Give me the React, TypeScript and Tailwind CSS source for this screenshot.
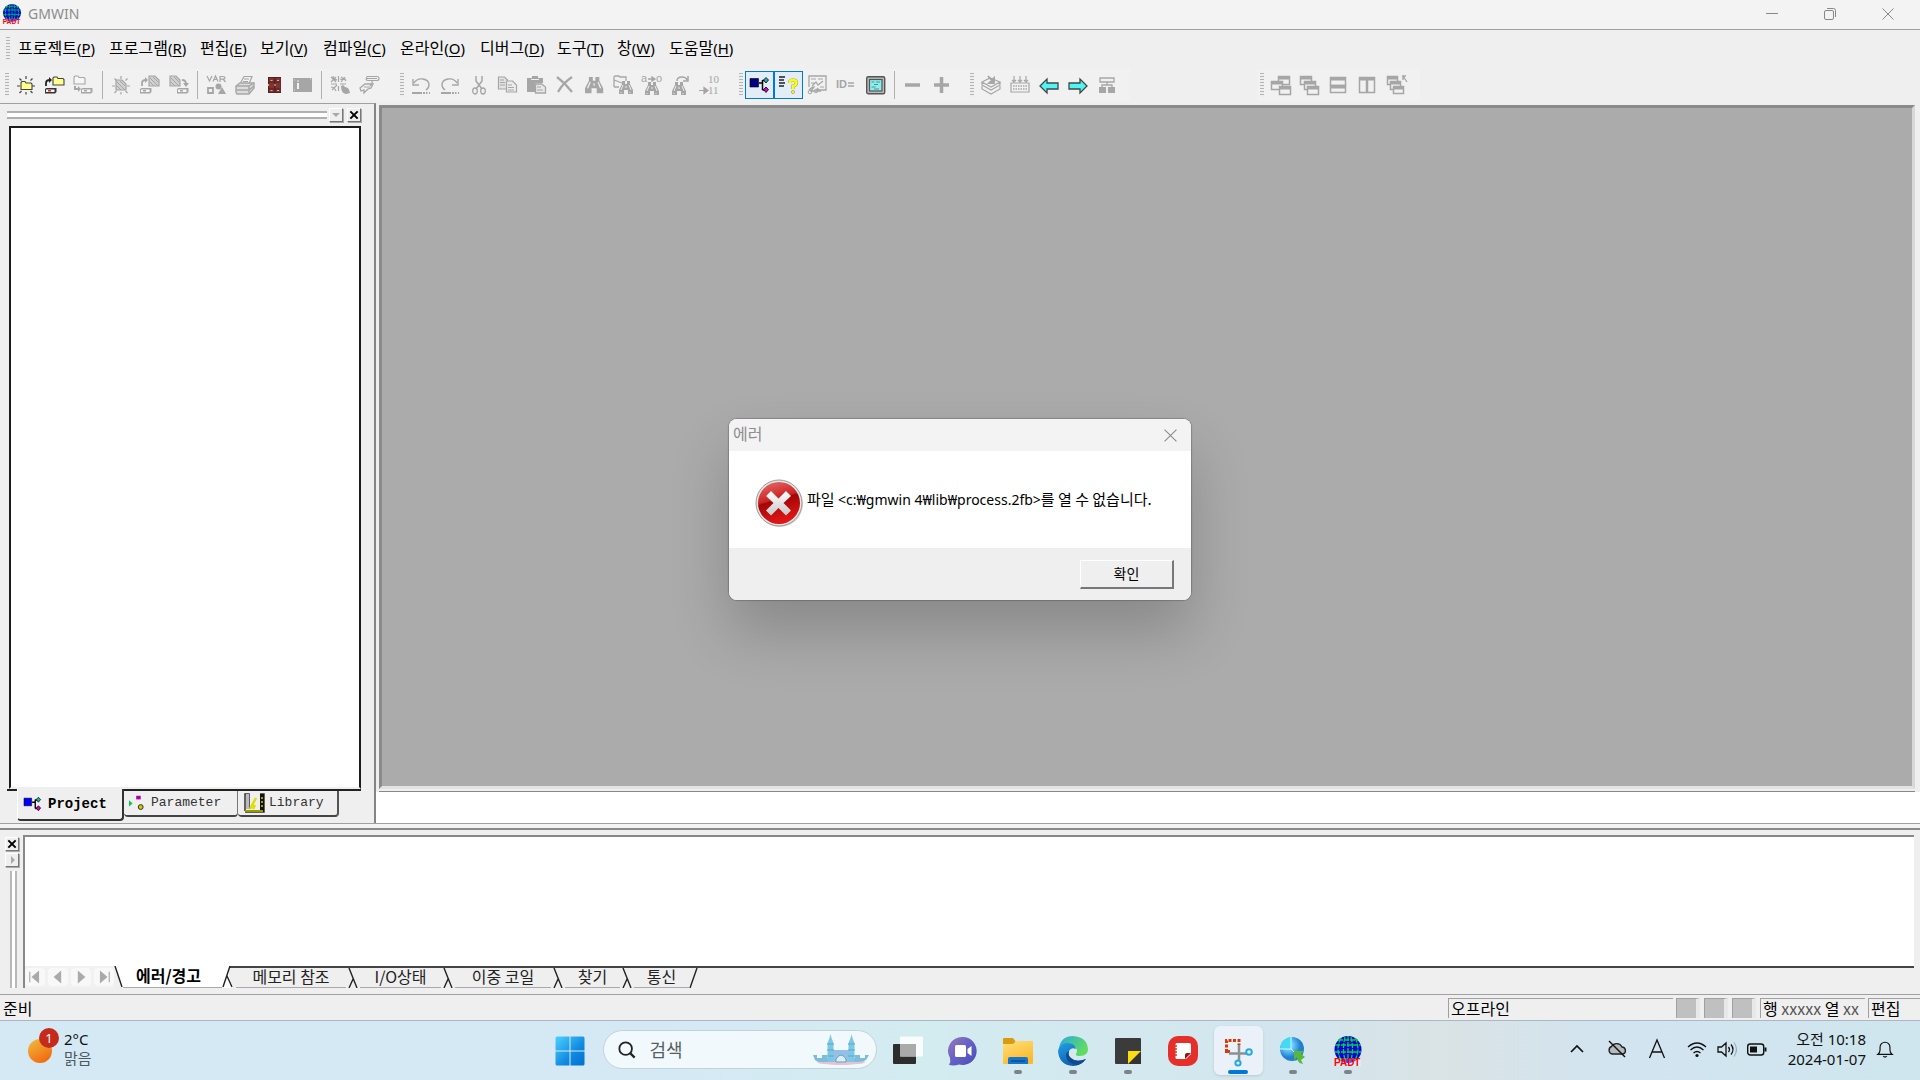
import React from 'react';

const G = '#a6a6a6';

type SvgProps = { children: React.ReactNode; size?: number; box?: string; className?: string };
const Svg = ({ children, size = 20, box = '0 0 20 20', className = '' }: SvgProps) => (
  <svg width={size} height={size} viewBox={box} fill="none" className={`overflow-visible ${className}`} aria-hidden="true">
    {children}
  </svg>
);

const Rays = ({ c }: { c: string }) => (
  <path d="M10 1v3M10 17v2.500M1 11h3M16 11h3M3.500 3.500l2 2M16.500 3.500l-2 2M3.500 18l2-2M16.500 18l-2-2" stroke={c} strokeWidth="1.200" />
);

const Folder = ({ x, y, fill, c }: { x: number; y: number; fill: string; c: string }) => (
  <path d={`M${x} ${y + 8.5}V${y + 1.5}l1-1h3l1 1.500h5l1 1v5.500z`} fill={fill} stroke={c} strokeWidth="1.100" />
);

const Disk = ({ x, y, c, led }: { x: number; y: number; c: string; led: string }) => (
  <>
    <path d={`M${x} ${y + 1}l1.500-1h10v4l-1.500 1.500h-10z`} fill={c} />
    <path d={`M${x + 1} ${y + 1.5}h8.500v2.500h-8.500z`} fill="#f6f6f6" />
    <path d={`M${x + 3} ${y + 2}h3v1.500h-3z`} fill={led} />
  </>
);

const Page = ({ x, y }: { x: number; y: number }) => (
  <>
    <path d={`M${x} ${y}h6l4 4v6h-10z`} fill="#d0d0d0" stroke={G} strokeWidth="1.200" />
    <path d={`M${x + 1} ${y + 2}l8 8M${x + 1} ${y + 6}l4 4M${x + 4} ${y + 1}l5 5`} stroke={G} />
  </>
);

const Bino = ({ x = 0, y = 0 }: { x?: number; y?: number }) => (
  <g transform={`translate(${x} ${y})`}>
    <path d="M3 0h3v3h2V0h3v3l3 6v4H9V9H5v4H0V9l3-6z" fill={G} />
    <path d="M4 4L2 9M10 4l2 5M2 11v1M11 11v1M7 5v2" stroke="#f1f1f1" strokeWidth="0.900" />
  </g>
);

const Win = ({ x, y, w = 11, h = 8 }: { x: number; y: number; w?: number; h?: number }) => (
  <>
    <rect x={x + 0.5} y={y + 0.5} width={w} height={h} fill="#f1f1f1" stroke={G} strokeWidth="1.500" />
    <rect x={x} y={y} width={w + 1} height="3.500" fill={G} />
  </>
);

const Tree = ({ fill, size = 20 }: { fill: string; size?: number }) => (
  <Svg size={size}>
    <path d="M0 3.500h8.500v8.500H0z" fill={fill} stroke="#000" strokeWidth="0.600" />
    <path d="M9 8h4M12.500 5v10M12.500 5.500h3M12.500 15h3" stroke="#000" strokeWidth="1.500" />
    <path d="M16 2.500l2.500 2.500L16 8 13.500 5z" fill="#2aa" stroke="#000" strokeWidth="0.800" />
    <path d="M16 12l2.500 2.500-2.500 3-2.500-3z" fill="#c0c" stroke="#000" strokeWidth="0.800" />
  </Svg>
);

const fileIcons: [string, React.ReactNode][] = [
  ['새 프로젝트', <Svg><Rays c="#444" /><Folder x={5} y={6} fill="#ffff8c" c="#444" /></Svg>],
  ['프로젝트 열기', <Svg><Folder x={8} y={1.5} fill="#ffff8c" c="#444" /><Disk x={0} y={13} c="#333" led="#e22" /><path d="M1 11V8q0-3 4-3" stroke="#222" strokeWidth="1.800" /><path d="M4 2l3 3-3 3z" fill="#222" /></Svg>],
  ['프로젝트 저장', <Svg><Folder x={0} y={0.5} fill="#f6f6f6" c={G} /><Disk x={7} y={13} c={G} led={G} /><path d="M1 11v3h4" stroke={G} strokeWidth="2" /><path d="M4 11l3 3-3 3z" fill={G} /></Svg>],
];
const programIcons: [string, React.ReactNode][] = [
  ['새 프로그램', <Svg><Rays c={G} /><Page x={5} y={5} /></Svg>],
  ['프로그램 열기', <Svg><Page x={9} y={1} /><Disk x={0} y={13} c={G} led={G} /><path d="M2 11V8q0-3 4-3" stroke={G} strokeWidth="1.800" /><path d="M5 2l3 3-3 3z" fill={G} /></Svg>],
  ['프로그램 저장', <Svg><Page x={1} y={1} /><Disk x={8} y={13} c={G} led={G} /><path d="M13 5q4 0 4 4" stroke={G} strokeWidth="1.800" /><path d="M14 8h6l-3 4z" fill={G} /></Svg>],
];
const viewIcons: [string, React.ReactNode][] = [
  ['변수', <Svg><path d="M1 1l2.500 5L6 1M7 6.500L9.500 1 12 6.500M8 4.500h3M14 7V1.500h3q2 0 2 1.300t-2 1.300h-3M17 4l2.500 3" stroke={G} strokeWidth="1.200" /><path d="M2 13h5v5H2z" stroke={G} strokeWidth="1.800" /><circle cx="12.500" cy="11.500" r="3" fill={G} /><path d="M16 12l4 7h-8z" fill={G} /></Svg>],
  ['인쇄', <Svg><path d="M5 9l4-7.500h8L14 9z" fill="#f1f1f1" stroke={G} strokeWidth="1.200" /><path d="M9 4h5M8 6.500h5" stroke={G} strokeWidth="1.100" /><path d="M1 11l4-3h14v5l-5 6H2l-1-2z" fill="#dcdcdc" stroke={G} strokeWidth="1.400" /><path d="M1 11h13l5-3M1 15h13l5-4M14 11v7" stroke={G} strokeWidth="1.400" /></Svg>],
  ['라이브러리', <Svg><path d="M4 2h13v16H4z" fill="#4f2226" /><path d="M5 3h5v14H5zM11.500 3h5v14h-5z" fill="#843038" /><path d="M5 7h5M11.500 7h5M5 14h5M11.500 14h5" stroke="#4a2024" /><path d="M6.500 5.500h2M13 5.500h2M6.500 15.500h2M13 15.500h2M4.500 9v2M11 9v2" stroke="#d9b84a" strokeWidth="1.200" /></Svg>],
  ['정보', <Svg><path d="M0 3h19v14H0z" fill={G} /><path d="M4 6h2M4.500 8v6M5.500 8v6" stroke="#f1f1f1" /><path d="M1 5h1M1 15h1M17 4h1" stroke="#ddd" /></Svg>],
];
const compileIcons: [string, React.ReactNode][] = [
  ['컴파일', <Svg><path d="M1 2l5 5M6 2L1 7M8.500 1v6M11 7l4-5M1 9h6M10 9h6M2 15l5-5M8.500 11v5M1 12q3 0 5 4M11 2q3 1 5 4M3 1q0 3 4 4M10 4q4 1 6 0" stroke={G} strokeWidth="1.200" /><path d="M11 11l2-1 2 2q4 0 5 6l-4 1q-5-1-5-8z" fill={G} /></Svg>],
  ['연결', <Svg><path d="M8 1.500h10q2 0 2 2t-2 2H9q-3 0-1-4M8 3.500h10M13 6v3l-2 2" stroke={G} strokeWidth="1.200" /><path d="M1 13l5-4h8l-2 4-3 1-4 4v-3l-3 1z" stroke={G} strokeWidth="1.300" /><path d="M5 12h6" stroke={G} /></Svg>],
];
const editIcons: [string, React.ReactNode][] = [
  ['실행 취소', <Svg><path d="M3 8q3-5 9-4 6 1 6 6 0 3-3 5M2 4v6h6" stroke={G} strokeWidth="1.400" /><path d="M1 18h10M12 18h2M15 18h1.500M18 18h1" stroke={G} strokeWidth="1.800" /></Svg>],
  ['다시 실행', <Svg><path d="M17 8q-3-5-9-4-6 1-6 6 0 3 3 5M18 4v6h-6" stroke={G} strokeWidth="1.400" /><path d="M1 18h10M12 18h2M15 18h1.500M18 18h1" stroke={G} strokeWidth="1.800" /></Svg>],
  ['잘라내기', <Svg><path d="M7 1v5l6 8M13 1v5l-6 8" stroke={G} strokeWidth="1.500" /><ellipse cx="6" cy="16" rx="2.300" ry="3" stroke={G} strokeWidth="1.300" /><ellipse cx="14" cy="16" rx="2.300" ry="3" stroke={G} strokeWidth="1.300" /></Svg>],
  ['복사', <Svg><path d="M0.500 2h6l3 3v9h-9z" fill="#e3e3e3" stroke={G} strokeWidth="1.200" /><path d="M8.500 6h6l4 4v7h-10z" fill="#ececec" stroke={G} strokeWidth="1.200" /><path d="M2 5h4M2 7.500h5M2 10h5M10 10h4M10 12.500h6M10 15h6" stroke={G} /></Svg>],
  ['붙여넣기', <Svg><path d="M0 3h5V1h6v2h5v5H8v9H0z" fill={G} /><path d="M4 4.500h8" stroke="#eee" /><path d="M8.500 9h6l4 3v6h-10z" fill="#e8e8e8" stroke={G} strokeWidth="1.300" /><path d="M10 12h4M10 15h6" stroke={G} /></Svg>],
  ['삭제', <Svg><path d="M1 2q8 6 15 15M16 2q-9 6-14 15" stroke={G} strokeWidth="2.200" /></Svg>],
  ['찾기', <Svg><g transform="translate(0 2) scale(1.300 1.250)"><path d="M3 0h3v3h2V0h3v3l3 6v4H9V9H5v4H0V9l3-6z" fill={G} /><path d="M4 4L2 9M10 4l2 5M7 5v2" stroke="#f1f1f1" strokeWidth="0.900" /></g></Svg>],
  ['파일에서 찾기', <Svg><path d="M0 12V2l1-1h4l1 1h6v4M0 5l8 3M0 12h5" stroke={G} strokeWidth="1.300" /><Bino x={5} y={6} /></Svg>],
  ['바꾸기', <Svg><text x="-2" y="7" fontSize="11" fontFamily="Liberation Sans" fill={G}>a</text><text x="13" y="7" fontSize="11" fontFamily="Liberation Sans" fill={G}>o</text><path d="M5 4h6M9 2l3 2-3 2z" stroke={G} strokeWidth="1.300" fill={G} /><Bino x={2} y={7} /></Svg>],
  ['다시 찾기', <Svg><path d="M5 6q0-4 5-4 4 0 5 3M16 1v5h-5" stroke={G} strokeWidth="1.500" /><Bino x={0} y={7} /></Svg>],
  ['줄 이동', <Svg><text x="7" y="8" fontSize="11" fontFamily="Liberation Serif" fill={G}>10</text><text x="7" y="19" fontSize="11" fontFamily="Liberation Serif" fill={G}>11</text><path d="M-2 15.500h6M3 12.500l4 3-4 3z" stroke={G} strokeWidth="1.200" fill={G} /></Svg>],
];
const showIcons: [string, React.ReactNode][] = [
  ['프로젝트 창', <Tree fill="#000080" />],
  ['메시지 창', <Svg><path d="M0 2h6M0 5h5M0 8h6M0 11h5" stroke="#222" strokeWidth="1.300" /><path d="M10.500 8q0-3 3.500-3t3.500 2.800q0 2.500-3.500 3.200v3" stroke="#888" strokeWidth="3.200" /><path d="M10.500 8q0-3 3.500-3t3.500 2.800q0 2.500-3.500 3.200v3" stroke="#ff0" strokeWidth="2.500" /><circle cx="14" cy="17" r="1.600" fill="#ff0" stroke="#777" strokeWidth="0.500" /></Svg>],
  ['모니터', <Svg><path d="M1 12V1h17v14H8" stroke={G} strokeWidth="1.300" /><path d="M3 4h5M10 4h5M4 11l4-4 2 3 5-4M3 8h3M12 12h4" stroke={G} strokeWidth="1.200" /><path d="M1 15q3-3 5-3l-3 4h9l-3-3" stroke={G} strokeWidth="1.300" /><circle cx="2" cy="17" r="1.800" stroke={G} /><circle cx="8" cy="16" r="1.800" stroke={G} /></Svg>],
  ['ID', <Svg><text x="-1" y="13" fontSize="11" fontWeight="bold" fontFamily="Liberation Sans" fill={G}>ID</text><path d="M11 8h6M11 11h6" stroke={G} strokeWidth="1.400" /></Svg>],
  ['출력 창', <Svg><rect x="0.700" y="1.700" width="18" height="17" rx="1.500" fill="#bbb" stroke="#555" strokeWidth="1.400" /><rect x="3.500" y="4.500" width="12.500" height="11.500" fill="#8deeee" stroke="#555" strokeWidth="1.200" /><path d="M5.500 7h3M10 7h4M8 9.500h4M5.500 12h4M8 14h5" stroke="#488" strokeWidth="0.900" /></Svg>],
];
const zoomIcons: [string, React.ReactNode][] = [
  ['축소', <Svg><path d="M2 10h15" stroke={G} strokeWidth="3.500" /></Svg>],
  ['확대', <Svg><path d="M2 10h15M9.500 2v16" stroke={G} strokeWidth="3.500" /></Svg>],
];
const onlineIcons: [string, React.ReactNode][] = [
  ['쓰기', <Svg><path d="M1 7l8-4 10 4-9 5zM1 7v3l9 5 9-5V7M1 11v3l9 5 9-5v-3" stroke={G} strokeWidth="1.200" /><path d="M7 1l5 6M13 3v5H8z" stroke={G} strokeWidth="1.800" fill={G} /></Svg>],
  ['읽기', <Svg><path d="M1 8h18v9H1zM4 1v6M10 1v6M16 1v6M2 5l2 2 2-2M8 5l2 2 2-2M14 5l2 2 2-2" stroke={G} strokeWidth="1.200" /><path d="M3 11h14M3 14h14" stroke={G} strokeWidth="1.600" strokeDasharray="1.500 1" /></Svg>],
  ['이전', <Svg><path d="M1 11l7-7v4h11v6H8v4z" fill="#4ef5f5" stroke="#444" strokeWidth="1.300" /></Svg>],
  ['다음', <Svg><path d="M19 11l-7-7v4H1v6h11v4z" fill="#4ef5f5" stroke="#444" strokeWidth="1.300" /></Svg>],
  ['네트워크', <Svg><path d="M3 3h14v4H3zM10 7v3M5 13v-3h10v3" stroke={G} strokeWidth="1.300" /><path d="M2 12h7v6H2zM11 12h7v6h-7z" fill={G} /></Svg>],
];
const windowIcons: [string, React.ReactNode][] = [
  ['정렬', <Svg><Win x={7} y={1} /><Win x={0} y={6} /><Win x={8} y={11} /></Svg>],
  ['계단식', <Svg><Win x={0} y={1} /><Win x={4} y={6} /><Win x={7} y={11} /></Svg>],
  ['가로 배열', <Svg><Win x={1} y={2} w={15} /><Win x={1} y={10} w={15} h={7} /></Svg>],
  ['세로 배열', <Svg><Win x={1} y={2} w={7} h={15} /><Win x={9} y={2} w={7} h={15} /></Svg>],
  ['모두 닫기', <Svg><Win x={0} y={1} w={10} /><Win x={3} y={6} w={10} /><Win x={6} y={11} w={10} h={7} /><path d="M15 1h4M16 1v4M16 1l4 6" stroke={G} strokeWidth="1.300" /></Svg>],
];

const Grip = () => (
  <span className="mr-0.5 h-6 w-1 shrink-0 bg-[repeating-linear-gradient(to_bottom,#b4b4b4_0px,#b4b4b4_1px,#eeeeee_1px,#eeeeee_3px)]" />
);
const Sep = () => <span className="mr-[3px] ml-1 h-7 w-px shrink-0 bg-[#b0b0b0]" />;
const Tools = ({ items, on = 0 }: { items: [string, React.ReactNode][]; on?: number }) => (
  <>
    {items.map(([name, icon], i) => (
      <button
        key={name}
        aria-label={name}
        className={`flex h-7 w-[29px] shrink-0 items-center justify-center ${i < on ? 'border border-[#0078d7] bg-[#e3edf7]' : ''}`}
      >
        {icon}
      </button>
    ))}
  </>
);

const menus: [string, string, string][] = [
  ['프로젝트', 'P', 'w-[91px]'],
  ['프로그램', 'R', 'w-[91px]'],
  ['편집', 'E', 'w-[60px]'],
  ['보기', 'V', 'w-[63px]'],
  ['컴파일', 'C', 'w-[77px]'],
  ['온라인', 'O', 'w-[80px]'],
  ['디버그', 'D', 'w-[77px]'],
  ['도구', 'T', 'w-[60px]'],
  ['창', 'W', 'w-[52px]'],
  ['도움말', 'H', 'w-[80px]'],
];

const Globe = ({ size }: { size: number }) => (
  <Svg size={size} box="0 0 30 30">
    <circle cx="15" cy="13.500" r="13.500" fill="#0000e0" />
    <path d="M15 0v24M2 9h26M2 16h26M5 4h20M8 2Q2 13 8 24M22 2q6 11 0 22M12 1q-3 12 0 23M18 1q3 12 0 23" stroke="#00d838" strokeWidth="1.300" strokeDasharray="5 1" />
    <path d="M2 22h26v8H2z" fill="#fff" fillOpacity="0.300" />
    <text x="1" y="30" fontSize="10" fontWeight="bold" fontFamily="Liberation Sans" fill="#f00">PADT</text>
  </Svg>
);

const CloseX = ({ size, c, w }: { size: number; c: string; w: number }) => (
  <Svg size={size} box="0 0 12 12"><path d="M0.500 0.500l11 11M11.500 0.500l-11 11" stroke={c} strokeWidth={w} /></Svg>
);

const bevel = 'border border-t-white border-l-white border-r-[#777] border-b-[#777] bg-[#efefef] shadow-[1px_1px_0_#aaa]';

const sheets: [string, string][] = [
  ['메모리 참조', 'w-[110px]'],
  ['I/O상태', 'w-[81px]'],
  ['이중 코일', 'w-[96px]'],
  ['찾기', 'w-[55px]'],
  ['통신', 'w-[55px]'],
];
const Cross = () => (
  <svg width="14" height="20" viewBox="0 0 14 20" className="shrink-0" fill="none" aria-hidden="true">
    <path d="M3 0l8 20M7.500 10L3 20" stroke="#222" strokeWidth="1.400" />
  </svg>
);

const Dialog = () => (
  <section role="dialog" aria-labelledby="dlg-title" className="absolute top-[419px] left-1/2 w-[462px] -translate-x-1/2 overflow-hidden rounded-lg bg-white shadow-[0_0_1px_1px_rgba(0,0,0,0.2),0_32px_60px_rgba(0,0,0,0.2)]">
    <header className="flex h-8 items-center justify-between bg-[#f3f3f3] pr-3.5 pl-1">
      <h2 id="dlg-title" className="pb-1 text-base leading-7 text-[#8d8d8d]">에러</h2>
      <button aria-label="닫기"><CloseX size={13} c="#8a8a8a" w={1} /></button>
    </header>
    <div className="flex h-[97px] items-start pt-7 pl-6">
      <svg width="52" height="50" viewBox="0 0 52 50" className="shrink-0" aria-hidden="true">
        <defs>
          <linearGradient id="err" x1="0" y1="0" x2="0.300" y2="1">
            <stop offset="0" stopColor="#e87070" />
            <stop offset="0.480" stopColor="#c22" />
            <stop offset="0.520" stopColor="#a00606" />
            <stop offset="1" stopColor="#e01515" />
          </linearGradient>
          <linearGradient id="errx" x1="0" y1="0" x2="0" y2="1">
            <stop offset="0" stopColor="#fff" />
            <stop offset="1" stopColor="#c8c8c8" />
          </linearGradient>
        </defs>
        <circle cx="27" cy="25" r="23" fill="#bbb" opacity="0.600" />
        <circle cx="26" cy="24" r="23" fill="#e4e4e4" stroke="#999" />
        <circle cx="26" cy="24" r="21" fill="url(#err)" />
        <path d="M18 12l7.500 7.500L33 12l5 5-7.500 7L38 31.500l-5 5-7.500-7.500-7.500 7.500-5-5 7.500-7.500-7.500-7z" fill="url(#errx)" />
      </svg>
      <p className="pt-2 pl-0.5 text-[15px] leading-6 whitespace-pre text-black">
        파일 <span className="font-['Noto_Sans','Noto_Sans_CJK_KR',sans-serif] text-sm leading-5">&lt;c:₩gmwin 4₩lib₩process.2fb&gt;</span>를 열 수 없습니다.
      </p>
    </div>
    <footer className="flex h-[52px] items-center justify-end bg-[#efefef] pr-[17px]">
      <button className="h-[29px] w-[94px] border-t border-r-2 border-b-2 border-l border-t-white border-r-[#777] border-b-[#777] border-l-white pb-0.5 text-sm leading-6 text-black">확인</button>
    </footer>
  </section>
);

const Task = ({ name, children, state = '' }: { name: string; children: React.ReactNode; state?: string }) => (
  <button aria-label={name} className="relative flex h-[59px] w-[55px] items-center justify-center">
    {state === 'active' && <span className="absolute inset-x-[3px] inset-y-[5px] rounded-md bg-[#eaf1f9] shadow-sm" />}
    <span className="relative">{children}</span>
    {state === 'open' && <span className="absolute bottom-1.5 h-1 w-2 rounded-full bg-[#7b8488]" />}
    {state === 'active' && <span className="absolute bottom-1.5 h-1 w-5 rounded-full bg-[#0078d7]" />}
  </button>
);

const Taskbar = () => (
  <footer className="grid h-15 shrink-0 grid-cols-[1fr_auto_1fr] border-t border-[#a9b8c2] bg-[linear-gradient(90deg,#d5e9f5_0%,#d5e9f5_35%,#d3ecf0_48%,#d3e5ee_68%,#dae3e5_75%,#d2e4f0_84%,#cfe6ee_100%)] font-['Noto_Sans','Noto_Sans_CJK_KR',sans-serif]">
    <button className="flex items-center justify-self-start pb-1 pl-7 text-left">
      <svg width="32" height="36" viewBox="0 0 32 36" className="mb-1.5" aria-hidden="true">
        <defs><linearGradient id="sun" x1="0" y1="0" x2="0.600" y2="1"><stop stopColor="#efc040" /><stop offset="1" stopColor="#f26a10" /></linearGradient></defs>
        <circle cx="12" cy="23" r="12" fill="url(#sun)" />
        <circle cx="21" cy="10" r="10" fill="#c42b1c" />
        <text x="21" y="15" textAnchor="middle" fontSize="13" fontFamily="Noto Sans" fill="#fff">1</text>
      </svg>
      <span className="pl-1 text-[15px] leading-[19px] text-[#111]">2°C<br /><span className="text-[#4c5960]">맑음</span></span>
    </button>
    <nav className="mr-0.5 flex items-center" aria-label="작업 표시줄">
      <Task name="시작">
        <Svg size={30} box="0 0 30 30">
          <defs><linearGradient id="win" x1="0" y1="0" x2="1" y2="1"><stop stopColor="#4cd2ff" /><stop offset="0.600" stopColor="#1189e0" /><stop offset="1" stopColor="#0070d0" /></linearGradient></defs>
          <path d="M2 0.500h12.500V14.500H0.500V2q0-1.500 1.500-1.500zM15.500 0.500H28q1.500 0 1.500 1.500V14.500H15.500zM0.500 15.500H14.500V29.500H2q-1.500 0-1.500-1.500zM15.500 15.500H29.500V28q0 1.500-1.500 1.500H15.500z" fill="url(#win)" />
        </Svg>
      </Task>
      <label className="mr-1 mb-0.5 ml-[5px] flex h-[39px] w-[274px] items-center rounded-full border border-[#bfd3dd] bg-[#f2f9fc] pr-1.5 pl-3.5">
        <Svg size={18} box="0 0 20 20"><circle cx="8.500" cy="8.500" r="7" stroke="#222" strokeWidth="2" /><path d="M13.500 13.500l5 5" stroke="#222" strokeWidth="2.500" /></Svg>
        <input aria-label="검색" placeholder="검색" className="ml-3.5 w-0 min-w-0 flex-1 bg-transparent text-lg leading-6 placeholder-[#555e63] outline-none" />
        <svg width="58" height="32" viewBox="0 0 58 32" aria-hidden="true">
          <ellipse cx="29" cy="28" rx="24" ry="3" fill="#e3c4d3" />
          <path d="M1 21h4v3h5v-3h5v3h28v-3h5v3h5v-3h4l-3 5q-3 2-8 2H11q-6 0-8-2z" fill="#7cbddb" />
          <path d="M15.500 28V9l2-5 1-4 1 4 2 5v7h15V9l2-5 1-4 1 4 2 5v19z" fill="#7cc8e4" />
          <path d="M21 16h16v12H21z" fill="#93c0e4" />
          <path d="M15 10h7M15 16h7M36 10h7M36 16h7M15 22h7M36 22h7" stroke="#5aa8ca" />
          <path d="M24 28v-3q5-8 10 0v3z" fill="#d9eef7" stroke="#6a9fbb" />
        </svg>
      </label>
      <Task name="작업 보기">
        <Svg size={30} box="0 0 30 30"><rect x="0" y="8" width="23" height="20" rx="1" fill="#2d2d2d" /><rect x="7" y="0.500" width="23" height="20" rx="1" fill="#fff" fillOpacity="0.850" /><rect x="7" y="8" width="16" height="12.500" fill="#aaa" /></Svg>
      </Task>
      <Task name="채팅">
        <Svg size={30} box="0 0 30 30">
          <defs><linearGradient id="chat" x1="0" y1="0" x2="1" y2="1"><stop stopColor="#9a78b8" /><stop offset="0.500" stopColor="#6460c8" /><stop offset="1" stopColor="#4a4cb8" /></linearGradient></defs>
          <path d="M15 1a14 14 0 1 1-4 27.500Q6 30 1 29q2-3 1-7A14 14 0 0 1 15 1z" fill="url(#chat)" />
          <rect x="7" y="9" width="11" height="12" rx="1.500" fill="#fff" /><path d="M19.500 13l4-3v10l-4-3z" fill="#fff" />
        </Svg>
      </Task>
      <Task name="파일 탐색기" state="open">
        <Svg size={30} box="0 0 30 30">
          <defs><linearGradient id="fold" x1="0" y1="0" x2="0.500" y2="1"><stop stopColor="#ffe07a" /><stop offset="1" stopColor="#fcb92c" /></linearGradient></defs>
          <path d="M0 3q0-1 1-1h9l3 4v5H0z" fill="#dc9a10" />
          <path d="M0 8h10l3-3h16q1 0 1 1v21q0 1-1 1H1q-1 0-1-1z" fill="url(#fold)" />
          <path d="M5 28v-5q0-2 2-2h16q2 0 2 2v5z" fill="#1675c8" /><path d="M8 25h14" stroke="#0b4f94" strokeWidth="1.500" />
        </Svg>
      </Task>
      <Task name="Edge" state="open">
        <Svg size={30} box="0 0 30 30">
          <defs>
            <linearGradient id="ed1" x1="0" y1="0" x2="1" y2="0.500"><stop stopColor="#2ba8e0" /><stop offset="1" stopColor="#60dd60" /></linearGradient>
            <linearGradient id="ed2" x1="0" y1="0" x2="0.600" y2="1"><stop stopColor="#22a0e8" /><stop offset="1" stopColor="#0c59a8" /></linearGradient>
          </defs>
          <path d="M1 12Q3 0 15 0q14 1 15 13 0 7-8 7-5 0-4-2 2-3 0-6-5-6-17 0z" fill="url(#ed1)" />
          <path d="M0 15Q2 7 9 7q8 0 9 6-5-2-7 2-2 6 5 9 5 2 12-1-5 7-13 7Q1 29 0 15z" fill="url(#ed2)" />
          <path d="M11 15q-2 6 5 9 5 2 12-1-3 4-8 6-11-1-12-9 0-4 3-5z" fill="#114a8e" />
        </Svg>
      </Task>
      <Task name="스티커 메모" state="open">
        <Svg size={30} box="0 0 30 30"><rect x="2" y="2" width="26" height="26" rx="1" fill="#3b3b3b" /><path d="M15 28L28 15v13z" fill="#333" /><path d="M15 15h13L15 28z" fill="#fbdc10" /></Svg>
      </Task>
      <Task name="노트">
        <Svg size={30} box="0 0 30 30"><rect width="30" height="30" rx="10" fill="#e5302a" /><path d="M9 7h12q2 0 2 2v9l-5 5H9q-1.500 0-1.500-1.500V8.500Q7.500 7 9 7z" fill="#fff" /><path d="M17 23v-4q0-2 2-2h4z" fill="#8d1616" /><path d="M6 10h3M6 13h3M6 16h3M6 19h3" stroke="#e5302a" strokeWidth="1.300" /></Svg>
      </Task>
      <Task name="캡처 도구" state="active">
        <Svg size={30} box="0 0 30 30"><path d="M3.500 16V4.500H16V9" stroke="#d83b01" strokeWidth="3" strokeDasharray="3 1.500" /><path d="M2 15.500h5" stroke="#d83b01" strokeWidth="3" /><path d="M16 9v15M6 17.500h17" stroke="#8f8f96" strokeWidth="2.500" /><circle cx="26" cy="16" r="2.800" stroke="#28a8e0" strokeWidth="2" /><circle cx="15" cy="27" r="2.600" stroke="#28a8e0" strokeWidth="2" /></Svg>
      </Task>
      <Task name="네트워크 도구" state="open">
        <Svg size={30} box="0 0 30 30">
          <defs><radialGradient id="ball" cx="0.350" cy="0.350"><stop stopColor="#b8f4ff" /><stop offset="0.600" stopColor="#4fb2f0" /><stop offset="1" stopColor="#2380cc" /></radialGradient></defs>
          <circle cx="14" cy="13" r="12" fill="url(#ball)" /><path d="M14 1v12H2Q3 2 14 1z" fill="#42dbf2" /><path d="M13 1v12l9 9M2 13h12" stroke="#d5f5ff" />
          <path d="M16 15h10l-3 3 4 3-4 3 2 4q-6-1-6-7l-3 3z" fill="#57b93c" />
        </Svg>
      </Task>
      <Task name="PADT" state="open"><Globe size={30} /></Task>
    </nav>
    <div className="flex items-center justify-self-end pr-[26px] pb-[3px] text-[#111]">
      <button aria-label="숨겨진 아이콘" className="flex w-10 justify-center"><Svg size={16} box="0 0 16 16"><path d="M2 11l6-6 6 6" stroke="#111" strokeWidth="1.700" /></Svg></button>
      <button aria-label="OneDrive" className="flex w-10 justify-center"><Svg><path d="M5 15a4 4 0 0 1-.500-7.500A6 6 0 0 1 15 8a3.600 3.600 0 0 1 1 7z" fill="#b5bcc0" stroke="#222" strokeWidth="1.400" /><path d="M2 2l16 16" stroke="#111" strokeWidth="1.500" /></Svg></button>
      <button aria-label="입력기" className="flex w-10 justify-center"><Svg><path d="M2.500 19L10 1l7.500 18M5 13h10" stroke="#111" strokeWidth="1.300" /></Svg></button>
      <button aria-label="네트워크, 볼륨, 배터리" className="ml-2.5 flex items-center gap-2.5">
        <Svg><path d="M1 8q9-8 18 0M3.500 11q6.500-6 13 0M6.500 14q3.500-3 7 0" stroke="#111" strokeWidth="1.300" /><circle cx="10" cy="16.500" r="1.600" fill="#111" /></Svg>
        <Svg><path d="M1 8v5h3.500L9 17V4L4.500 8zM11.500 8q2 2.500 0 5M14 5.500q4 5 0 10" stroke="#111" strokeWidth="1.300" /><path d="M17 3.500q5 7 0 14" stroke="#9fb0b8" strokeWidth="1.200" /></Svg>
        <Svg><rect x="0.700" y="5" width="16" height="11" rx="2.500" stroke="#111" strokeWidth="1.400" /><path d="M3 7.500h7v6H3zM17.500 8.500h2v4h-2z" fill="#111" /></Svg>
      </button>
      <button className="ml-[21px] text-right text-[15px] leading-5 whitespace-nowrap">오전 10:18<br />2024-01-07</button>
      <button aria-label="알림" className="ml-2.5"><Svg size={18}><path d="M2 16q2.500-2 2.500-5V8a5.500 5.500 0 0 1 11 0v3q0 3 2.500 5zM8 18q2 2 4 0" stroke="#111" strokeWidth="1.300" /></Svg></button>
    </div>
  </footer>
);

const navIcons: [string, string][] = [
  ['처음', 'M2 2v12M12 2v12L5 8z'],
  ['이전', 'M11 2v12L4 8z'],
  ['다음', 'M5 2v12l7-6z'],
  ['마지막', 'M4 2v12l7-6zM14 2v12'],
];

export default function App() {
  return (
    <div className="relative flex min-h-screen flex-col bg-[#efefef] font-['Noto_Sans_CJK_KR',sans-serif] text-black">
      <header className="flex h-[30px] shrink-0 items-center justify-between border-b border-[#a0a0a0] bg-[#f3f3f3] pr-[26px] pb-px pl-0.5">
        <div className="flex items-center gap-1.5">
          <Globe size={20} />
          <h1 className="font-['Noto_Sans',sans-serif] text-sm text-[#8c8c8c]">GMWIN</h1>
        </div>
        <div className="flex items-center gap-[46px]">
          <button aria-label="최소화"><Svg size={12} box="0 0 12 12"><path d="M0 5.500h12" stroke="#888" /></Svg></button>
          <button aria-label="이전 크기로"><Svg size={12} box="0 0 12 12"><rect x="0.500" y="2.500" width="9" height="9" rx="1.500" stroke="#888" /><path d="M3 0.500h6.500q2 0 2 2V9" stroke="#888" /></Svg></button>
          <button aria-label="닫기"><CloseX size={12} c="#888" w={1} /></button>
        </div>
      </header>

      <nav className="flex h-[37px] shrink-0 items-center pl-1.5" aria-label="메뉴">
        <Grip />
        <div className="flex pb-1 pl-1.5">
          {menus.map(([name, key, w]) => (
            <button key={key} className={`${w} text-left text-base leading-6 whitespace-nowrap`}>
              {name}<span className="font-['Noto_Sans',sans-serif] text-[15px] leading-5">(<u className="underline-offset-2">{key}</u>)</span>
            </button>
          ))}
        </div>
      </nav>

      <div className="flex h-9 shrink-0 items-center" role="toolbar">
        <div className="flex h-8 w-[397px] shrink-0 items-center bg-[#f1f1f1] pl-[5px]">
          <Grip />
          <Tools items={fileIcons} /><Sep /><Tools items={programIcons} /><Sep /><Tools items={viewIcons} /><Sep /><Tools items={compileIcons} />
        </div>
        <div className="flex h-8 w-[337px] shrink-0 items-center bg-[#f1f1f1] pl-[3px]"><Grip /><Tools items={editIcons} /></div>
        <div className="flex h-8 w-[233px] shrink-0 items-center bg-[#f1f1f1] pl-[5px]"><Grip /><Tools items={showIcons} on={2} /><Sep /><Tools items={zoomIcons} /></div>
        <div className="mr-[127px] flex h-8 w-[163px] shrink-0 items-center bg-[#f1f1f1] pl-[3px]"><Grip /><Tools items={onlineIcons} /></div>
        <div className="flex h-8 w-[163px] shrink-0 items-center bg-[#f1f1f1] pl-[3px]"><Grip /><Tools items={windowIcons} /></div>
      </div>

      <main className="flex flex-1">
        <aside className="flex w-[376px] shrink-0 flex-col border-t border-r-2 border-t-[#a0a0a0] border-r-[#858585] pr-[13px] pb-0.5 pl-[7px]">
          <div className="flex h-[22px] items-center pb-px">
            <div className="h-2 flex-1 border-y-2 border-t-[#b0b0b0] border-b-[#b0b0b0] bg-white" />
            <button aria-label="접기" className={`mx-0.5 flex h-3.5 w-3.5 items-center justify-center ${bevel}`}><Svg size={8} box="0 0 8 8"><path d="M0 2h8L4 6z" fill="#aaa" /></Svg></button>
            <button aria-label="닫기" className={`ml-0.5 flex h-3.5 w-3.5 items-center justify-center ${bevel}`}><CloseX size={8} c="#000" w={3} /></button>
          </div>
          <div className="ml-0.5 flex-1 border-t-2 border-r-2 border-b-2 border-l-2 border-[#1c1c1c] border-b-[#efefef] bg-white" />
          <div className="flex h-8 items-start border-t-2 border-[#222] pl-2.5" role="tablist">
            <button role="tab" aria-selected="true" className="-mt-0.5 flex h-8 w-[107px] items-center gap-1.5 rounded-b-sm border-r-2 border-b-2 border-l border-r-[#333] border-b-[#333] border-l-white bg-[#efefef] pl-1.5 font-['Liberation_Mono',monospace] text-sm font-bold">
              <Tree fill="#0000ff" size={18} />Project
            </button>
            <button role="tab" aria-selected="false" className="flex h-[26px] w-[114px] items-center gap-1 rounded-b-sm border-r border-b-2 border-r-[#777] border-b-[#444] pl-[5px] font-['Liberation_Mono',monospace] text-[13px] text-[#333]">
              <Svg size={18}><path d="M0 7l4 3.500L0 14z" fill="#0c4" /><path d="M8 2h5v4H8z" fill="#a0a" /><circle cx="13" cy="14.500" r="2.700" fill="#cc0" stroke="#222" /></Svg>Parameter
            </button>
            <button role="tab" aria-selected="false" className="flex h-[26px] w-[101px] items-center gap-1 rounded-b-sm border-r-2 border-b-2 border-r-[#555] border-b-[#444] pl-[7px] font-['Liberation_Mono',monospace] text-[13px] text-[#333]">
              <Svg><path d="M0 18V1h4v15M15 1h4v18H0" fill="none" stroke="#333" strokeWidth="1.500" /><path d="M15 1h4v18h-4z" fill="#111" /><path d="M1 1h3v15H1z" fill="#bbb" /><path d="M5 16L11 5M8 16l2-4" stroke="#dd0" strokeWidth="2.500" /><path d="M0 18h18" stroke="#990" strokeWidth="2" /><path d="M17 4v2M17 8v2M17 12v2" stroke="#cc0" strokeWidth="1.500" /></Svg>Library
            </button>
          </div>
        </aside>
        <div className="flex flex-1 flex-col pt-0.5 pl-[3px]">
          <div className="mr-[5px] flex-1 border-3 border-[#8a8a8a] border-r-[#d8d8d8] border-b-[#e2e2e2] bg-[#ababab]" />
          <div className="mr-[5px] h-[3px] border-b border-[#888]" />
          <div className="-ml-[3px] h-[31px] bg-white" />
        </div>
      </main>

      <section className="flex h-[171px] shrink-0 flex-col border-t border-[#a0a0a0]">
        <div className="h-1.5 shrink-0 border-b-2 border-[#8a8a8a] bg-[#f4f4f4]" />
        <div className="flex min-h-0 flex-1 pt-[5px] pr-1.5 pb-1.5">
          <div className="flex w-[23px] flex-col items-center pt-0.5">
            <button aria-label="닫기" className={`flex h-3.5 w-3.5 shrink-0 items-center justify-center ${bevel}`}><CloseX size={8} c="#000" w={3} /></button>
            <button aria-label="펼치기" className={`mt-0.5 flex h-3.5 w-3.5 shrink-0 items-center justify-center ${bevel}`}><Svg size={8} box="0 0 8 8"><path d="M3 0v8l4-4z" fill="#aaa" /></Svg></button>
            <div className="mt-1 ml-1 w-[7px] flex-1 border-x-2 border-[#b8b8b8] bg-white" />
          </div>
          <div className="flex flex-1 flex-col border-t-2 border-l-2 border-[#888] bg-white">
            <div className="flex-1" />
            <div className="flex h-[22px] items-stretch text-base leading-4" role="tablist">
              <div className="flex items-center gap-[3px] bg-[#f1f1f1]">
                {navIcons.map(([name, d]) => (
                  <button key={name} aria-label={name} className="flex h-[18px] w-5 items-center justify-center rounded-sm bg-[#f8f8f8]">
                    <Svg size={14} box="0 0 16 16"><path d={d} fill="#aaa" stroke="#aaa" strokeWidth="1.300" /></Svg>
                  </button>
                ))}
              </div>
              <svg width="9" height="22" viewBox="0 0 9 22" className="shrink-0" aria-hidden="true"><path d="M0 0v22h8L1 0z" fill="#efefef" /><path d="M1 0l7 21" stroke="#222" strokeWidth="1.400" /></svg>
              <button role="tab" aria-selected="true" className="w-[99px] border-b border-[#aaa] pr-2 pb-1 font-bold">에러/경고</button>
              <svg width="14" height="22" viewBox="0 0 14 22" className="shrink-0" fill="none" aria-hidden="true">
                <path d="M7 0h7v22h-3L7 11z" fill="#efefef" />
                <path d="M7 1h7" stroke="#444" strokeWidth="2" />
                <path d="M8 0L1 21M5 10l5 11" stroke="#222" strokeWidth="1.400" />
              </svg>
              <div className="flex flex-1 border-t-2 border-[#444] bg-[#efefef]">
                {sheets.map(([name, w], i) => (
                  <React.Fragment key={name}>
                    {i > 0 && <Cross />}
                    <button role="tab" aria-selected="false" className={`${w} border-b border-[#aaa] pb-1 whitespace-nowrap text-[#222]`}>{name}</button>
                  </React.Fragment>
                ))}
                <svg width="9" height="20" viewBox="0 0 9 20" aria-hidden="true"><path d="M8 0L1 20" stroke="#222" strokeWidth="1.400" /></svg>
              </div>
            </div>
          </div>
        </div>
      </section>

      <div className="flex h-[26px] shrink-0 items-center gap-[3px] border-t border-[#a0a0a0] text-base leading-5" role="status">
        <span className="flex-1 pl-[3px]">준비</span>
        <span className="h-5 w-[225px] border-t border-l border-[#a0a0a0] pl-0.5 leading-[18px]">오프라인</span>
        {[0, 1, 2].map((i) => (
          <span key={i} className="mr-px h-5 w-6 border-t border-r-4 border-l border-[#a0a0a0] border-r-[#e8e8e8] bg-[#c0c0c0]" />
        ))}
        <span className="h-5 w-[105px] border-t border-l border-[#a0a0a0] pl-0.5 leading-[18px] whitespace-nowrap">행 <span className="text-[#555]">xxxxx</span> 열 <span className="text-[#555]">xx</span></span>
        <span className="h-5 w-[52px] border-t border-l border-[#a0a0a0] pl-0.5 leading-[18px]">편집</span>
      </div>

      <Taskbar />
      <Dialog />
    </div>
  );
}
